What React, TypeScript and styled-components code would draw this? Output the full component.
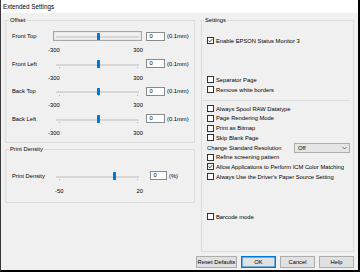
import React from 'react';
import styled, { createGlobalStyle } from 'styled-components';

const GlobalStyle = createGlobalStyle`
  html, body { margin: 0; padding: 0; background: #f0f0f0; }
  body {
    font-family: "Liberation Sans", Arial, sans-serif;
    font-size: 5.8px;
    color: #000;
  }
  * { box-sizing: border-box; }
`;

const Window = styled.div`
  width: 360px;
  height: 272px;
  display: flex;
  flex-direction: column;
  background: #f0f0f0;
  border-left: 1px solid #3a3a3a;
  border-right: 2px solid #000;
  border-bottom: 2px solid #000;
`;

const TitleBar = styled.div`
  flex: none;
  height: 13px;
  background: #fff;
  padding-left: 2px;
  font-size: 6.3px;
  line-height: 13px;
`;

const Body = styled.div`
  flex: 1;
  display: flex;
  flex-direction: column;
  padding: 3px 4px 0 4px;
`;

const Columns = styled.div`
  display: flex;
  gap: 6px;
  align-items: flex-start;
`;

const LeftColumn = styled.div`
  width: 190px;
  display: flex;
  flex-direction: column;
  gap: 2px;
`;

const Group = styled.fieldset<{ $height: number; $padTop: number; $padLeft?: number; $width?: number }>`
  margin: 0;
  min-width: 0;
  width: ${p => (p.$width ? `${p.$width}px` : 'auto')};
  height: ${p => p.$height}px;
  padding: ${p => p.$padTop}px 3px 0 ${p => p.$padLeft ?? 6}px;
  border: 1px solid #dcdcdc;
  display: flex;
  flex-direction: column;
`;

const Legend = styled.legend`
  margin-left: -3px;
  padding: 0 1px;
  height: 8px;
  line-height: 8px;
`;

/* ---- slider rows ---- */

const SliderRowBox = styled.div<{ $height: number }>`
  height: ${p => p.$height}px;
  display: flex;
  flex-direction: column;
  flex: none;
`;

const ControlLine = styled.div`
  height: 10px;
  display: flex;
  align-items: center;
`;

const RowLabel = styled.span`
  width: 41px;
  flex: none;
  white-space: nowrap;
`;

const SliderBox = styled.div<{ $focused?: boolean }>`
  position: relative;
  width: 89px;
  height: 10px;
  flex: none;
  border: 1px solid ${p => (p.$focused ? '#a6a6a6' : 'transparent')};
  box-shadow: ${p => (p.$focused ? 'inset 0 0 0 1px #e6e6e6' : 'none')};
`;

const Track = styled.div`
  position: absolute;
  left: 2px;
  right: 2px;
  top: 4px;
  height: 2px;
  background: #e7e7e7;
  border: 0.5px solid #d6d6d6;
`;

const Tick = styled.div`
  position: absolute;
  top: 7.5px;
  width: 1px;
  height: 1px;
  background: #b5b5b5;
`;

const Thumb = styled.div`
  position: absolute;
  top: 0.5px;
  width: 3px;
  height: 7.5px;
  background: #0078d7;
  border-radius: 0.5px;
`;

const NumberInput = styled.div<{ $gap: number; $width: number }>`
  margin-left: ${p => p.$gap}px;
  width: ${p => p.$width}px;
  height: 9px;
  flex: none;
  background: #fff;
  border: 1px solid #8a8a8a;
  padding-left: 2.5px;
  line-height: 7px;
`;

const Unit = styled.span`
  margin-left: 2px;
  white-space: nowrap;
`;

const TickLabels = styled.div<{ $left: number; $width: number; $top: number }>`
  margin-top: ${p => p.$top}px;
  margin-left: ${p => p.$left}px;
  width: ${p => p.$width}px;
  height: 8px;
  line-height: 8px;
  display: flex;
  justify-content: space-between;
`;

interface SliderProps {
  min: number;
  max: number;
  value: number;
  focused?: boolean;
  ticks: number[];
}

const TICK_START = 5;
const TICK_SPAN = 78;

function Slider({ min, max, value, focused, ticks }: SliderProps) {
  const pos = (v: number) => TICK_START + ((v - min) / (max - min)) * TICK_SPAN;
  return (
    <SliderBox $focused={focused}>
      <Track />
      {ticks.map(t => (
        <Tick key={t} style={{ left: pos(t) }} />
      ))}
      <Thumb style={{ left: pos(value) - 1.5 }} />
    </SliderBox>
  );
}

interface SliderRowProps {
  label: string;
  min: number;
  max: number;
  value: number;
  unit: string;
  focused?: boolean;
  height: number;
  inputGap: number;
  inputWidth: number;
  labelsLeft: number;
  labelsWidth: number;
  labelsTop: number;
}

function SliderRow(p: SliderRowProps) {
  return (
    <SliderRowBox $height={p.height}>
      <ControlLine>
        <RowLabel>{p.label}</RowLabel>
        <Slider min={p.min} max={p.max} value={p.value} focused={p.focused} ticks={[p.min, 0, p.max]} />
        <NumberInput $gap={p.inputGap} $width={p.inputWidth}>{p.value}</NumberInput>
        <Unit>{p.unit}</Unit>
      </ControlLine>
      <TickLabels $left={p.labelsLeft} $width={p.labelsWidth} $top={p.labelsTop}>
        <span>{p.min}</span>
        <span>{p.max}</span>
      </TickLabels>
    </SliderRowBox>
  );
}

/* ---- settings ---- */

const CheckRow = styled.div<{ $gap?: number }>`
  height: 9.7px;
  flex: none;
  margin-top: ${p => p.$gap ?? 0}px;
  display: flex;
  align-items: center;
  white-space: nowrap;
`;

const Box = styled.span`
  width: 7px;
  height: 7px;
  flex: none;
  margin-right: 2px;
  background: #fff;
  border: 0.8px solid #333;
  display: flex;
  align-items: center;
  justify-content: center;
`;

const Separator = styled.div<{ $before: number; $after: number }>`
  height: 1px;
  flex: none;
  margin: ${p => p.$before}px 0 ${p => p.$after}px -5px;
  background: #dcdcdc;
`;

const Select = styled.div`
  margin-left: auto;
  width: 56px;
  height: 10px;
  flex: none;
  background: #e5e5e5;
  border: 1px solid #adadad;
  display: flex;
  align-items: center;
  justify-content: space-between;
  padding: 0 2px 0 3px;
`;

function Check({ label, checked, gap }: { label: string; checked?: boolean; gap?: number }) {
  return (
    <CheckRow $gap={gap}>
      <Box>
        {checked && (
          <svg width="5" height="5" viewBox="0 0 5 5">
            <polyline points="0.6,2.5 1.9,3.9 4.4,1" fill="none" stroke="#222" strokeWidth="0.75" />
          </svg>
        )}
      </Box>
      {label}
    </CheckRow>
  );
}

/* ---- buttons ---- */

const ButtonBar = styled.div`
  margin-top: 4px;
  display: flex;
  justify-content: flex-end;
  gap: 4px;
`;

const Button = styled.button<{ $width: number; $default?: boolean }>`
  width: ${p => p.$width}px;
  height: 12px;
  padding: 0;
  font-family: inherit;
  font-size: 5.8px;
  color: #000;
  background: #e1e1e1;
  border: 1px solid ${p => (p.$default ? '#0078d7' : '#adadad')};
  box-shadow: ${p => (p.$default ? 'inset 0 0 0 0.5px #0078d7' : 'none')};
`;

const offsetRows = ['Front Top', 'Front Left', 'Back Top', 'Back Left'];

export default function App() {
  return (
    <>
      <GlobalStyle />
      <Window>
        <TitleBar>Extended Settings</TitleBar>
        <Body>
          <Columns>
            <LeftColumn>
              <Group $height={127} $padTop={7}>
                <Legend>Offset</Legend>
                {offsetRows.map((name, i) => (
                  <SliderRow
                    key={name}
                    label={name}
                    min={-300}
                    max={300}
                    value={0}
                    unit="(0.1mm)"
                    focused={i === 0}
                    height={27.5}
                    inputGap={4}
                    inputWidth={19}
                    labelsLeft={36}
                    labelsWidth={95}
                    labelsTop={5}
                  />
                ))}
              </Group>
              <Group $height={58} $padTop={17.5}>
                <Legend>Print Density</Legend>
                <SliderRow
                  label="Print Density"
                  min={-50}
                  max={20}
                  value={0}
                  unit="(%)"
                  height={24}
                  inputGap={8}
                  inputWidth={17}
                  labelsLeft={43}
                  labelsWidth={88}
                  labelsTop={6.5}
                />
              </Group>
            </LeftColumn>
            <Group $height={236} $padTop={12} $padLeft={5} $width={153}>
              <Legend>Settings</Legend>
              <Check label="Enable EPSON Status Monitor 3" checked />
              <Check label="Separator Page" gap={29.3} />
              <Check label="Remove white borders" />
              <Separator $before={5.4} $after={3.2} />
              <Check label="Always Spool RAW Datatype" />
              <Check label="Page Rendering Mode" />
              <Check label="Print as Bitmap" />
              <Check label="Skip Blank Page" />
              <CheckRow>
                Change Standard Resolution
                <Select>
                  <span>Off</span>
                  <svg width="5" height="4" viewBox="0 0 5 4">
                    <polyline points="0.5,1 2.5,3 4.5,1" fill="none" stroke="#333" strokeWidth="0.6" />
                  </svg>
                </Select>
              </CheckRow>
              <Check label="Refine screening pattern" />
              <Check label="Allow Applications to Perform ICM Color Matching" checked />
              <Check label="Always Use the Driver's Paper Source Setting" />
              <Check label="Barcode mode" gap={30.4} />
            </Group>
          </Columns>
          <ButtonBar>
            <Button $width={41}>Reset Defaults</Button>
            <Button $width={35} $default>OK</Button>
            <Button $width={35}>Cancel</Button>
            <Button $width={35}>Help</Button>
          </ButtonBar>
        </Body>
      </Window>
    </>
  );
}
